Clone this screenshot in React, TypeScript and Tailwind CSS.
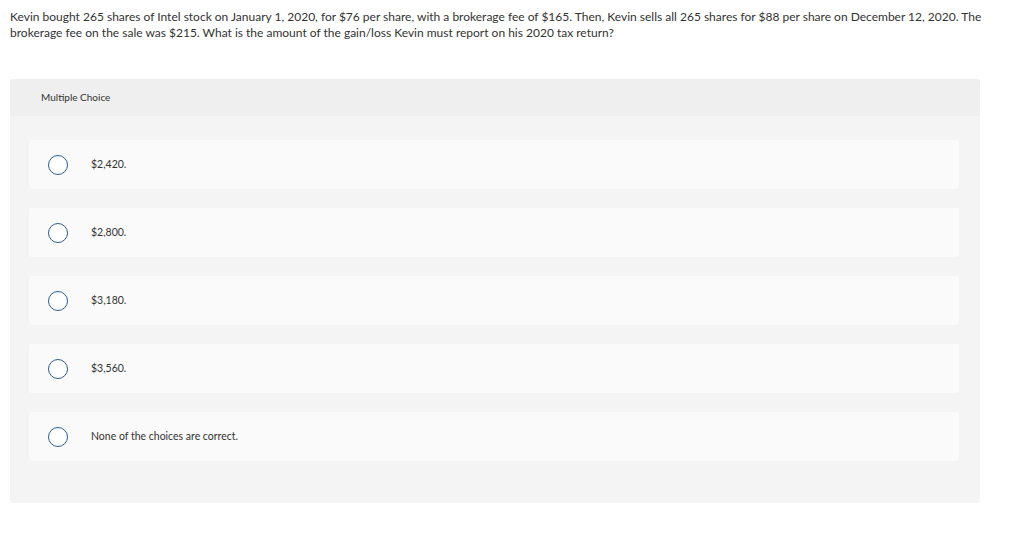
import React from "react";

const choices = ["$2,420.", "$2,800.", "$3,180.", "$3,560.", "None of the choices are correct."];

export default function App() {
  return (
    <div className="w-[1024px] h-[538px] bg-white text-[#333] font-['Lato',sans-serif]">
      <div className="pl-[10px] pr-[30px] pt-[9px] text-[12px] leading-[16px]">
        Kevin bought 265 shares of Intel stock on January 1, 2020, for $76 per share, with a brokerage fee of $165. Then, Kevin sells all 265 shares for $88 per share on December 12, 2020. The brokerage fee on the sale was $215. What is the amount of the gain/loss Kevin must report on his 2020 tax return?
      </div>
      <div className="ml-[10px] mt-[38px] w-[970px] h-[424px] bg-[#f4f4f4] rounded-[3px] overflow-hidden">
        <div className="h-[37px] bg-[#efefef] flex items-center pl-[31px] text-[10px]">Multiple Choice</div>
        <div className="flex flex-col gap-[19px] pt-[24px] pl-[19px] pr-[21px]">
          {choices.map((c) => (
            <div key={c} className="h-[49px] bg-[#fafafa] rounded-[3px] flex items-center">
              <div className="ml-[19px] w-[20px] h-[20px] rounded-full border border-[#2d5b8e] bg-white" />
              <div className="ml-[23px] text-[10.5px]">{c}</div>
            </div>
          ))}
        </div>
      </div>
    </div>
  );
}
